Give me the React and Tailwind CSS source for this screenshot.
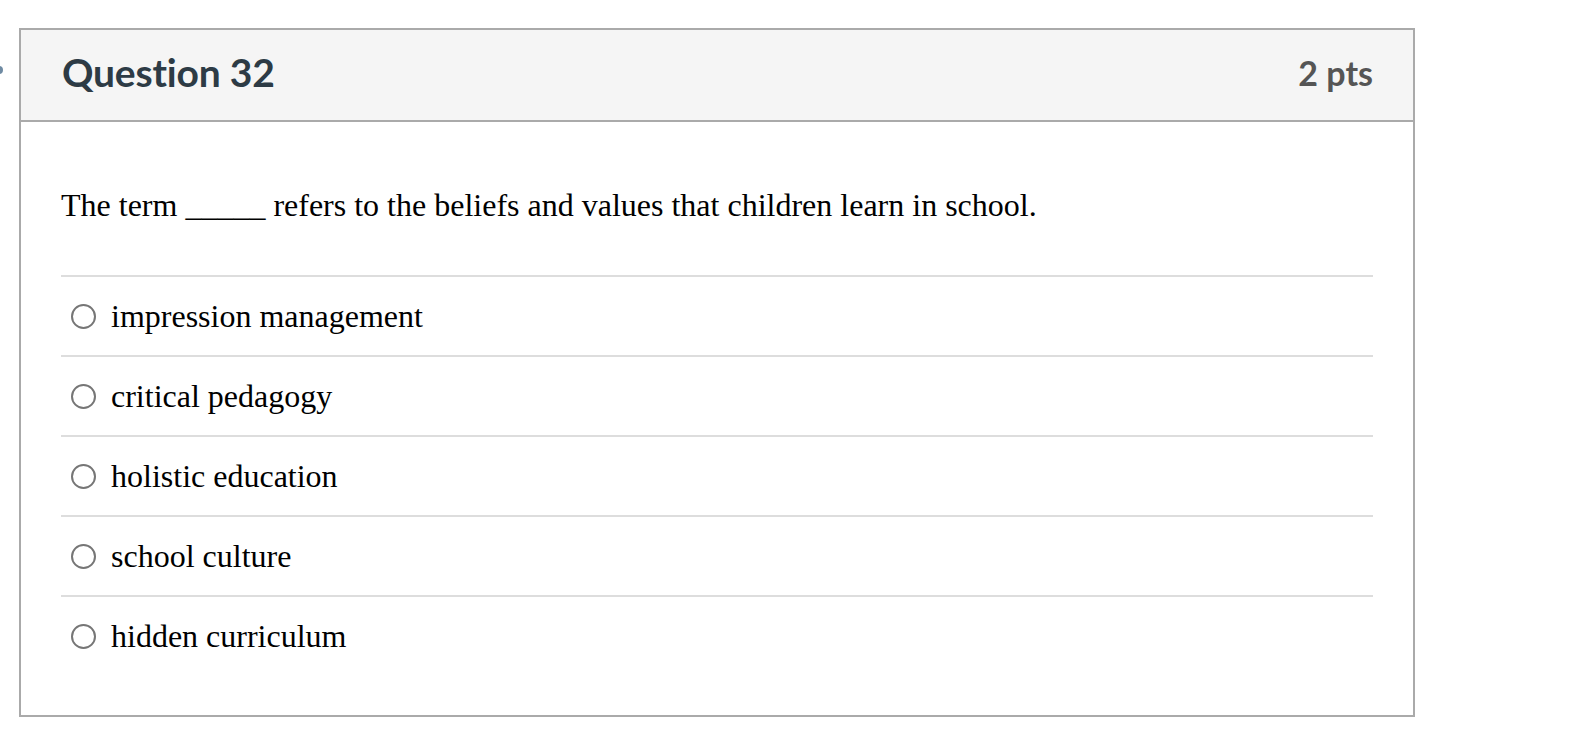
import React from 'react'

const ANSWERS = [
  'impression management',
  'critical pedagogy',
  'holistic education',
  'school culture',
  'hidden curriculum',
]

function Radio() {
  return (
    <span className="w-[25px] h-[25px] rounded-full border-2 border-[#767676] bg-white flex-shrink-0" />
  )
}

export default function App() {
  return (
    <div className="relative min-h-[751px] bg-white pt-[28px] pl-[19px]">
      {/* flag marker peeking in from the left */}
      <span className="absolute left-[-5px] top-[66px] w-[8px] h-[8px] rounded-full bg-[#6f8ba3]" />

      <div className="w-[1396px] border-2 border-[#aaaaaa] bg-white">
        {/* Header */}
        <div className="h-[92px] flex items-center justify-between bg-[#f5f5f5] border-b-2 border-[#aaaaaa] pl-[41px] pr-[40px] pb-[5px] font-['Lato',sans-serif] font-bold">
          <h2 className="text-[39px] text-[#2d3b45] tracking-[-0.2px]">Question 32</h2>
          <span className="text-[34px] text-[#555555]">2 pts</span>
        </div>

        {/* Body */}
        <div className="px-[40px] pb-[40px] font-['Liberation_Serif','Times_New_Roman',serif] text-black">
          <p className="pt-[63px] pb-[50px] text-[32px] leading-[40px]">
            The term _____ refers to the beliefs and values that children learn in school.
          </p>

          <div className="flex flex-col">
            {ANSWERS.map((a) => (
              <label
                key={a}
                className="h-[80px] flex items-center gap-[15px] border-t-2 border-[#dddddd] pl-[10px]"
              >
                <Radio />
                <span className="text-[32px] leading-[36px]">{a}</span>
              </label>
            ))}
          </div>
        </div>
      </div>
    </div>
  )
}
